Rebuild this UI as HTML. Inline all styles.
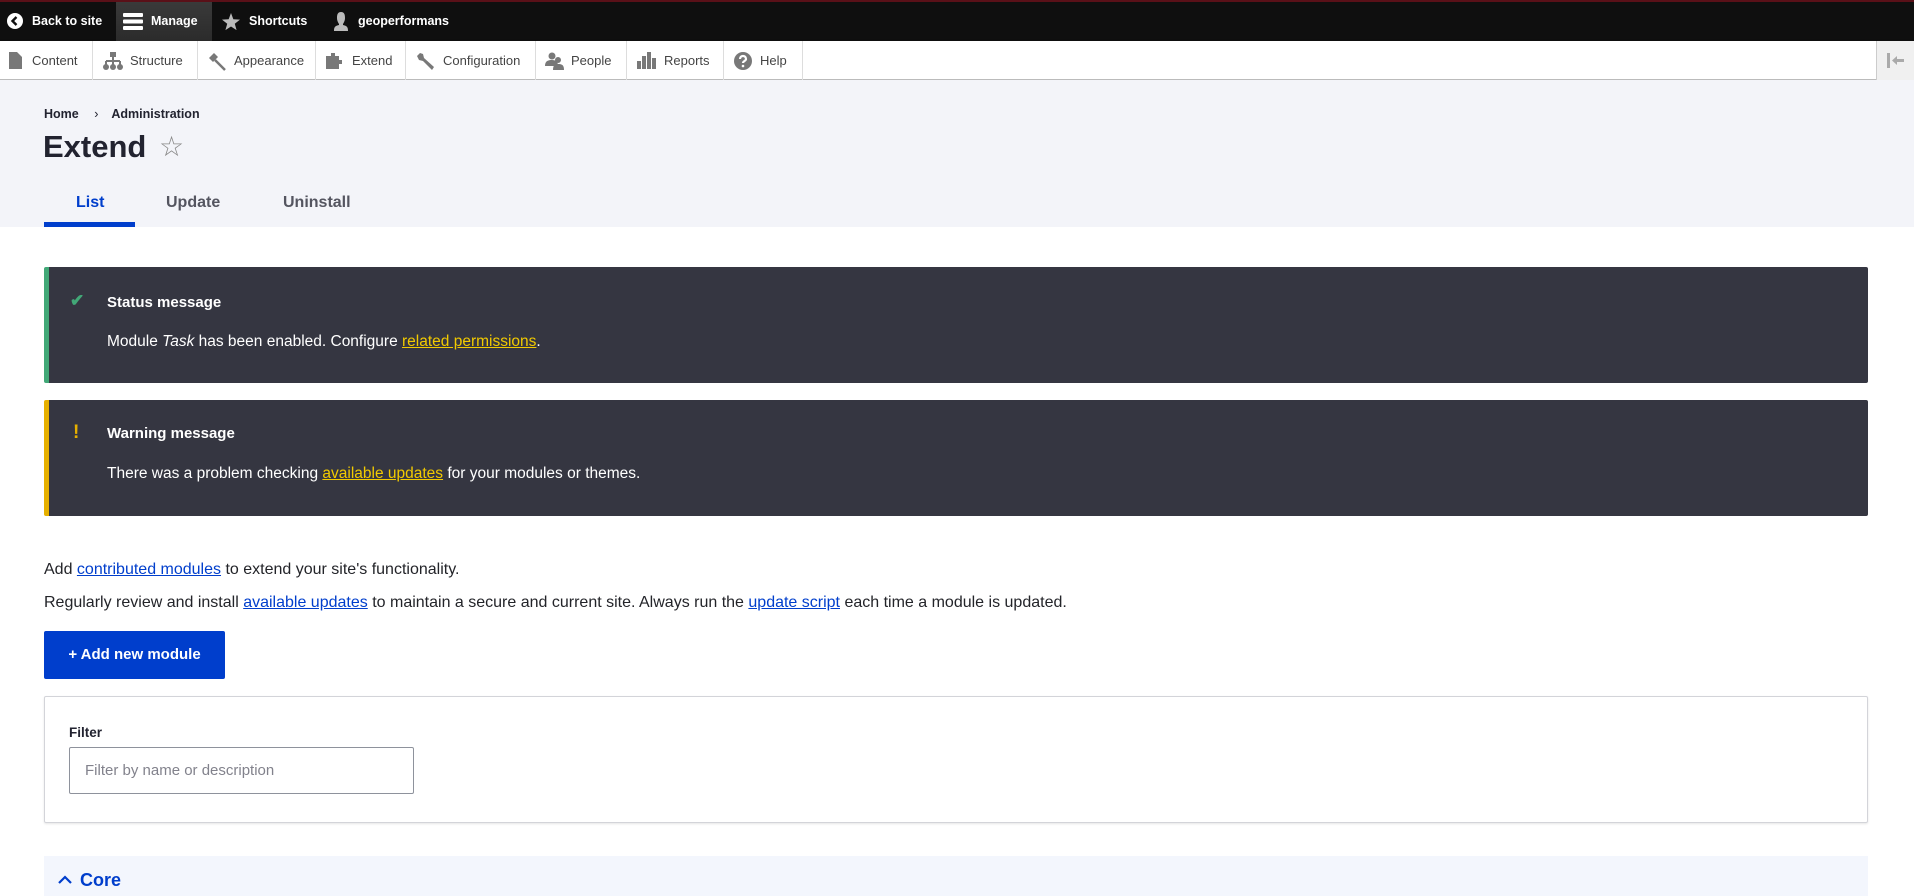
<!DOCTYPE html>
<html><head><meta charset="utf-8"><style>
*{box-sizing:border-box;margin:0;padding:0}
body{width:1914px;height:891px;overflow:hidden;background:#fff;font-family:"Liberation Sans",sans-serif;color:#232429;position:relative}
.a{position:absolute;white-space:nowrap}
#top{position:absolute;left:0;top:0;width:1914px;height:41px;background:#0f0f0f;border-top:2px solid #5a1018}
#top .t{position:absolute;top:0;height:39px;line-height:39px;color:#fff;font-weight:bold;font-size:12.5px}
#tray{position:absolute;left:0;top:41px;width:1914px;height:39px;background:#fff;box-shadow:0 2px 3px rgba(0,0,0,.35);border-bottom:1px solid #bbb}
#tray .i{position:absolute;top:0;height:39px;line-height:39px;font-size:13px;color:#444;border-right:1px solid #ddd}
#tray svg{position:absolute;top:11px}
#hdr{position:absolute;left:0;top:80px;width:1914px;height:147px;background:#f3f4f9}
.msg{position:absolute;left:44px;width:1824px;background:#353641;border-radius:2px}
.msg .ttl{position:absolute;left:58px;color:#fff;font-weight:bold;font-size:15px}
.msg .bd{position:absolute;left:58px;color:#fff;font-size:15.5px}
.msg a{color:#f2ca00;text-decoration:underline}
p a{color:#003ecc;text-decoration:underline}
</style></head><body>
<div id="top">
  <div class="t" style="left:0;width:116px">
    <svg class="a" style="left:7px;top:11px" width="16" height="16" viewBox="0 0 16 16"><circle cx="8" cy="8" r="8" fill="#fff"/><path d="M9.5 4 L5.5 8 L9.5 12" stroke="#0f0f0f" stroke-width="2.4" fill="none"/></svg>
    <span class="a" style="left:32px">Back to site</span></div>
  <div class="t" style="left:116px;width:96px;background:linear-gradient(#3a3a3a,#2b2b2b)">
    <svg class="a" style="left:7px;top:11px" width="20" height="17" viewBox="0 0 20 17"><rect y="0" width="20" height="4" rx="1" fill="#fff"/><rect y="6.5" width="20" height="4" rx="1" fill="#fff"/><rect y="13" width="20" height="4" rx="1" fill="#fff"/></svg>
    <span class="a" style="left:35px">Manage</span></div>
  <div class="t" style="left:212px">
    <svg class="a" style="left:10px;top:11px" width="18" height="18" viewBox="0 0 20 20"><path d="M10 0 L12.6 7 L20 7.3 L14.2 11.9 L16.2 19 L10 15 L3.8 19 L5.8 11.9 L0 7.3 L7.4 7 Z" fill="#bbb"/></svg>
    <span class="a" style="left:37px">Shortcuts</span></div>
  <div class="t" style="left:325px">
    <svg class="a" style="left:7px;top:10px" width="18" height="20" viewBox="0 0 18 20"><path d="M9 0 C5.5 0 5 3 5 6 C5 9 6.5 11 7 12 L7 13 C3 14 2 15 2 19 L16 19 C16 15 15 14 11 13 L11 12 C11.5 11 13 9 13 6 C13 3 12.5 0 9 0Z" fill="#bbb"/></svg>
    <span class="a" style="left:33px">geoperformans</span></div>
</div>
<div id="tray">
  <div class="i" style="left:0;width:93px"><svg style="left:9px" width="13" height="17" viewBox="0 0 13 17"><path d="M0 0 H8 L13 5 V17 H0Z" fill="#787878"/></svg><span class="a" style="left:32px">Content</span></div>
  <div class="i" style="left:93px;width:105px"><svg style="left:10px" width="20" height="18" viewBox="0 0 20 18"><rect x="7" y="0" width="6" height="5" fill="#787878"/><path d="M10 5V9M3 9H17M3 9V13M10 9V13M17 9V13" stroke="#787878" stroke-width="2" fill="none"/><circle cx="3" cy="15" r="3" fill="#787878"/><circle cx="10" cy="15" r="3" fill="#787878"/><circle cx="17" cy="15" r="3" fill="#787878"/></svg><span class="a" style="left:37px">Structure</span></div>
  <div class="i" style="left:198px;width:118px"><svg style="left:9px" width="20" height="19" viewBox="0 0 20 19"><path d="M2 6 L7 1 L11 5 L6 10Z" fill="#787878"/><path d="M8 8 L18 18" stroke="#787878" stroke-width="2.5"/></svg><span class="a" style="left:36px">Appearance</span></div>
  <div class="i" style="left:316px;width:90px"><svg style="left:10px" width="19" height="18" viewBox="0 0 19 18"><path d="M0 4 H5 V1 H9 V4 H13 V8 H16 V12 H13 V17 H0Z" fill="#787878"/></svg><span class="a" style="left:36px">Extend</span></div>
  <div class="i" style="left:406px;width:130px"><svg style="left:9px" width="20" height="19" viewBox="0 0 20 19"><path d="M2 4 L5 1 L8 2 L9 6 L19 15 L17 18 L8 9 L4 8Z" fill="#787878"/></svg><span class="a" style="left:37px">Configuration</span></div>
  <div class="i" style="left:536px;width:91px"><svg style="left:9px" width="20" height="18" viewBox="0 0 20 18"><circle cx="7" cy="4" r="3.5" fill="#787878"/><path d="M0 14 C0 9 3 8 7 8 C11 8 13 10 13 14Z" fill="#787878"/><circle cx="13" cy="8" r="3" fill="#787878"/><path d="M8 18 C8 13 10 12 13 12 C17 12 19 13 19 18Z" fill="#787878"/></svg><span class="a" style="left:35px">People</span></div>
  <div class="i" style="left:627px;width:97px"><svg style="left:10px" width="19" height="17" viewBox="0 0 19 17"><rect x="0" y="9" width="4" height="8" fill="#787878"/><rect x="5" y="4" width="4" height="13" fill="#787878"/><rect x="10" y="0" width="4" height="17" fill="#787878"/><rect x="15" y="6" width="4" height="11" fill="#787878"/></svg><span class="a" style="left:37px">Reports</span></div>
  <div class="i" style="left:724px;width:79px"><svg style="left:10px" width="18" height="18" viewBox="0 0 18 18"><circle cx="9" cy="9" r="9" fill="#787878"/><path d="M6 7 C6 3 12 3 12 7 C12 9 9 9 9 11" stroke="#fff" stroke-width="2.2" fill="none"/><circle cx="9" cy="14" r="1.3" fill="#fff"/></svg><span class="a" style="left:36px">Help</span></div>
  <div class="i" style="left:1876px;width:38px;border-left:1px solid #ccc;border-right:0;background:#f0f0f0"><svg style="left:10px;top:12px" width="18" height="15" viewBox="0 0 18 15"><rect x="0" y="0" width="3" height="15" fill="#aaa"/><path d="M5 7.5 L10 3 V6 H17 V9 H10 V12Z" fill="#aaa"/></svg></div>
</div>
<div id="hdr">
  <div class="a" style="left:44px;top:27px;font-size:12.5px;font-weight:bold;color:#222330">Home <span style="margin:0 10px 0 12px;font-weight:normal">›</span> Administration</div>
  <div class="a" style="left:43px;top:49px;font-size:31px;font-weight:bold;color:#222330">Extend</div>
  <div class="a" style="left:159px;top:50px;font-size:28px;color:#888">☆</div>
  <div class="a" style="left:76px;top:114px;font-size:16px;font-weight:bold;color:#003ecc">List</div>
  <div class="a" style="left:166px;top:114px;font-size:16px;font-weight:bold;color:#545560">Update</div>
  <div class="a" style="left:283px;top:114px;font-size:16px;font-weight:bold;color:#545560">Uninstall</div>
  <div class="a" style="left:44px;top:142px;width:91px;height:5px;background:#003ecc"></div>
</div>
<div class="msg" style="top:267px;height:116px;border-left:5px solid #42a877">
  <div class="a" style="left:21px;top:24px;color:#42a877;font-size:17px;font-weight:bold">✔</div>
  <div class="ttl" style="top:27px">Status message</div>
  <div class="bd" style="top:66px">Module <i>Task</i> has been enabled. Configure <a>related permissions</a>.</div>
</div>
<div class="msg" style="top:400px;height:116px;border-left:5px solid #e6b000">
  <div class="a" style="left:24px;top:22px;color:#e6b000;font-size:19px;font-weight:bold">!</div>
  <div class="ttl" style="top:25px">Warning message</div>
  <div class="bd" style="top:65px">There was a problem checking <a>available updates</a> for your modules or themes.</div>
</div>
<p class="a" style="left:44px;top:561px;font-size:16px">Add <a>contributed modules</a> to extend your site's functionality.</p>
<p class="a" style="left:44px;top:594px;font-size:16px">Regularly review and install <a>available updates</a> to maintain a secure and current site. Always run the <a>update script</a> each time a module is updated.</p>
<div class="a" style="left:44px;top:631px;width:181px;height:48px;background:#003ecc;border-radius:2px;color:#fff;font-weight:bold;font-size:15px;line-height:48px;text-align:center">+ Add new module</div>
<div class="a" style="left:44px;top:696px;width:1824px;height:127px;border:1px solid #d3d4d9;border-radius:2px;box-shadow:0 1px 2px rgba(0,0,0,.1)">
  <div class="a" style="left:24px;top:28px;font-size:13.5px;font-weight:bold;color:#222330">Filter</div>
  <div class="a" style="left:24px;top:50px;width:345px;height:47px;border:1px solid #8e929c;border-radius:2px;font-size:15px;color:#82828c;line-height:45px;padding-left:15px">Filter by name or description</div>
</div>
<div class="a" style="left:44px;top:856px;width:1824px;height:40px;background:#f3f6fd">
  <svg class="a" style="left:14px;top:19px" width="14" height="9" viewBox="0 0 14 9"><path d="M1 8 L7 2 L13 8" stroke="#003ecc" stroke-width="2.2" fill="none"/></svg>
  <div class="a" style="left:36px;top:14px;font-size:18px;font-weight:bold;color:#003ecc">Core</div>
</div>
</body></html>
